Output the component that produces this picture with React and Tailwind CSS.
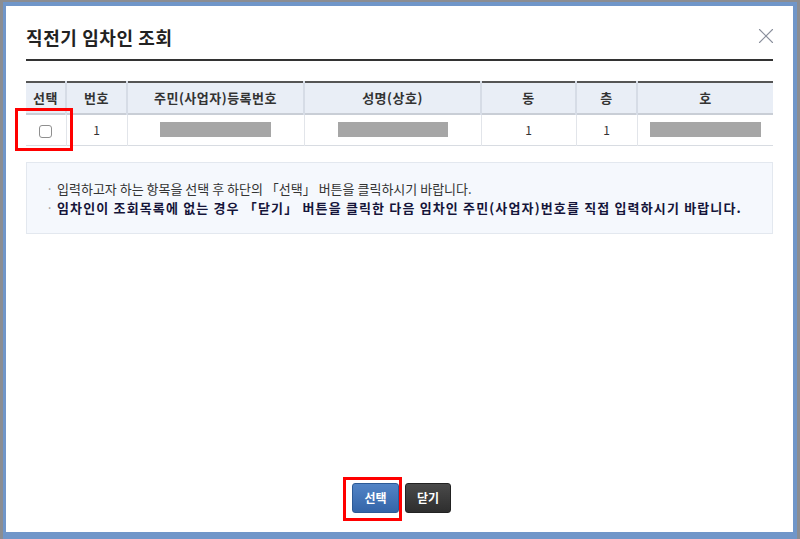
import { X } from 'lucide-react';

const COLS = [
  { key: 'sel', label: '선택', width: 40 },
  { key: 'no', label: '번호', width: 61 },
  { key: 'rrn', label: '주민(사업자)등록번호', width: 177 },
  { key: 'name', label: '성명(상호)', width: 177 },
  { key: 'dong', label: '동', width: 95 },
  { key: 'floor', label: '층', width: 61 },
  { key: 'ho', label: '호', width: 136 },
];

function Redacted({ width }) {
  return <div className="mx-auto h-[15px] bg-[#a6a6a6]" style={{ width }} />;
}

function Highlight({ className }) {
  return <div className={`pointer-events-none absolute border-[3px] border-[#ff0000] ${className}`} />;
}

export default function App() {
  return (
    <div
      className="h-[539px] w-[800px] overflow-hidden border-l-[3px] border-t-[2px] border-r-[3px] border-[#8b8d92] bg-[#7096c9] pl-[3px] pt-[4px] pr-[4px] pb-[7px]"
      style={{ fontFamily: '"Noto Sans CJK KR", "Noto Sans", sans-serif' }}
    >
      <div className="flex h-full flex-col bg-white px-[20px]">
        <div className="flex items-center justify-between border-b-2 border-[#333] pt-[18px] pb-[10px]">
          <h2 className="text-[18px] font-bold leading-[24px] tracking-[0.6px] text-[#222]">직전기 임차인 조회</h2>
          <X className="mr-[-6px] mt-[-1px] h-[26px] w-[26px] text-[#8a8f9c]" strokeWidth={1} />
        </div>

        <table className="mt-[20px] w-full table-fixed border-collapse border-t-2 border-[#555] text-[12px] text-[#333]">
          <colgroup>
            {COLS.map((c) => (
              <col key={c.key} style={{ width: c.width }} />
            ))}
          </colgroup>
          <thead>
            <tr className="h-[32px] border-b-2 border-[#c9ced6] bg-[#e9eef6]">
              {COLS.map((c, i) => (
                <th
                  key={c.key}
                  className={`text-[13px] font-bold tracking-[0.5px] text-[#333] ${i > 0 ? 'border-l-2 border-[#d6dce6]' : ''}`}
                >
                  {c.label}
                </th>
              ))}
            </tr>
          </thead>
          <tbody>
            <tr className="h-[31px] border-b border-[#d8dce2] text-[#333]">
              <td className="relative text-center">
                <span className="inline-block h-[13px] w-[13px] rounded-[3px] border border-[#8f8f8f] bg-white align-middle" />
                <Highlight className="-left-[11px] -right-[7px] -top-[7px] -bottom-[6px]" />
              </td>
              <td className="border-l border-[#e2e5ea] text-center text-[#333]">1</td>
              <td className="border-l border-[#e2e5ea]">
                <Redacted width={111} />
              </td>
              <td className="border-l border-[#e2e5ea]">
                <Redacted width={110} />
              </td>
              <td className="border-l border-[#e2e5ea] text-center text-[#333]">1</td>
              <td className="border-l border-[#e2e5ea] text-center text-[#333]">1</td>
              <td className="border-l border-[#e2e5ea]">
                <Redacted width={111} />
              </td>
            </tr>
          </tbody>
        </table>

        <div className="mt-[16px] border border-[#e3e8ef] bg-[#f5f8fd] py-[16px] pl-[19px] text-[13px] leading-[19px]">
          <p className="flex text-[#333]">
            <span className="w-[11px] text-[#999]">·</span>
            입력하고자 하는 항목을 선택 후 하단의 「선택」 버튼을 클릭하시기 바랍니다.
          </p>
          <p className="flex font-bold tracking-[1.15px] text-[#15153a]">
            <span className="w-[11px] font-normal tracking-normal text-[#999]">·</span>
            임차인이 조회목록에 없는 경우 「닫기」 버튼을 클릭한 다음 임차인 주민(사업자)번호를 직접 입력하시기 바랍니다.
          </p>
        </div>

        <div className="mt-auto flex justify-center gap-[6px] pb-[19px] pl-[4px] text-[12px] font-bold text-white">
          <div className="relative">
            <button className="h-[30px] w-[47px] rounded-[3px] border border-[#2c5a96] bg-gradient-to-b from-[#5284c6] to-[#3465a8]">
              선택
            </button>
            <Highlight className="-left-[9px] -right-[3px] -top-[6px] -bottom-[8px]" />
          </div>
          <button className="h-[30px] w-[46px] rounded-[3px] border border-[#222] bg-gradient-to-b from-[#4a4a4a] to-[#2e2e2e]">
            닫기
          </button>
        </div>
      </div>
    </div>
  );
}
